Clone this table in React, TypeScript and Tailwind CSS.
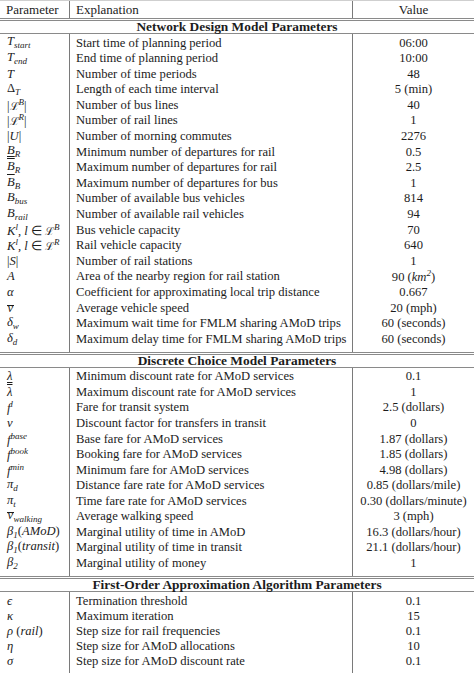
import React from "react";

type Row = { p: React.ReactNode; e: string; v: React.ReactNode };

const I = ({ children }: { children: React.ReactNode }) => <i className="italic">{children}</i>;
const Sub = ({ children }: { children: React.ReactNode }) => (
  <span className="text-[9px] italic align-[-3px] leading-none">{children}</span>
);
const Sup = ({ children }: { children: React.ReactNode }) => (
  <span className="text-[9px] italic align-[5px] leading-none">{children}</span>
);
const Bar = ({ children }: { children: React.ReactNode }) => (
  <span className="italic overline decoration-[0.5px]">{children}</span>
);
// bar over a lowercase letter: a short top border just above the x-height
const LowBar = ({ children }: { children: React.ReactNode }) => (
  <span className="inline-block italic leading-[5.5px] border-t border-[#1c1c1c] px-[0.5px]">{children}</span>
);
const Under = ({ children }: { children: React.ReactNode }) => (
  <span className="italic underline decoration-[0.8px] underline-offset-[2px]">{children}</span>
);
const Cal = ({ children }: { children: React.ReactNode }) => (
  <span className="[font-family:'DejaVu_Serif',serif] text-[11px]">{children}</span>
);

const network: Row[] = [
  { p: <><I>T</I><Sub>start</Sub></>, e: "Start time of planning period", v: "06:00" },
  { p: <><I>T</I><Sub>end</Sub></>, e: "End time of planning period", v: "10:00" },
  { p: <I>T</I>, e: "Number of time periods", v: "48" },
  { p: <>Δ<Sub>T</Sub></>, e: "Length of each time interval", v: "5 (min)" },
  { p: <>|<Cal>ℒ</Cal><Sup>B</Sup>|</>, e: "Number of bus lines", v: "40" },
  { p: <>|<Cal>ℒ</Cal><Sup>R</Sup>|</>, e: "Number of rail lines", v: "1" },
  { p: <>|<I>U</I>|</>, e: "Number of morning commutes", v: "2276" },
  { p: <><Under>B</Under><Sub>R</Sub></>, e: "Minimum number of departures for rail", v: "0.5" },
  { p: <><Bar>B</Bar><Sub>R</Sub></>, e: "Maximum number of departures for rail", v: "2.5" },
  { p: <><Bar>B</Bar><Sub>B</Sub></>, e: "Maximum number of departures for bus", v: "1" },
  { p: <><I>B</I><Sub>bus</Sub></>, e: "Number of available bus vehicles", v: "814" },
  { p: <><I>B</I><Sub>rail</Sub></>, e: "Number of available rail vehicles", v: "94" },
  { p: <><I>K</I><Sup>l</Sup>, <I>l</I> ∈ <Cal>ℒ</Cal><Sup>B</Sup></>, e: "Bus vehicle capacity", v: "70" },
  { p: <><I>K</I><Sup>l</Sup>, <I>l</I> ∈ <Cal>ℒ</Cal><Sup>R</Sup></>, e: "Rail vehicle capacity", v: "640" },
  { p: <>|<I>S</I>|</>, e: "Number of rail stations", v: "1" },
  { p: <I>A</I>, e: "Area of the nearby region for rail station", v: <>90 (<I>km</I><Sup>2</Sup>)</> },
  { p: <I>α</I>, e: "Coefficient for approximating local trip distance", v: "0.667" },
  { p: <LowBar>v</LowBar>, e: "Average vehicle speed", v: "20 (mph)" },
  { p: <><I>δ</I><Sub>w</Sub></>, e: "Maximum wait time for FMLM sharing AMoD trips", v: "60 (seconds)" },
  { p: <><I>δ</I><Sub>d</Sub></>, e: "Maximum delay time for FMLM sharing AMoD trips", v: "60 (seconds)" },
];

const choice: Row[] = [
  { p: <Under>λ</Under>, e: "Minimum discount rate for AMoD services", v: "0.1" },
  { p: <Bar>λ</Bar>, e: "Maximum discount rate for AMoD services", v: "1" },
  { p: <><I>f</I><Sup>l</Sup></>, e: "Fare for transit system", v: "2.5 (dollars)" },
  { p: <I>ν</I>, e: "Discount factor for transfers in transit", v: "0" },
  { p: <><I>f</I><Sup>base</Sup></>, e: "Base fare for AMoD services", v: "1.87 (dollars)" },
  { p: <><I>f</I><Sup>book</Sup></>, e: "Booking fare for AMoD services", v: "1.85 (dollars)" },
  { p: <><I>f</I><Sup>min</Sup></>, e: "Minimum fare for AMoD services", v: "4.98 (dollars)" },
  { p: <><I>π</I><Sub>d</Sub></>, e: "Distance fare rate for AMoD services", v: "0.85 (dollars/mile)" },
  { p: <><I>π</I><Sub>t</Sub></>, e: "Time fare rate for AMoD services", v: "0.30 (dollars/minute)" },
  { p: <><LowBar>v</LowBar><Sub>walking</Sub></>, e: "Average walking speed", v: "3 (mph)" },
  { p: <><I>β</I><Sub>1</Sub>(<I>AMoD</I>)</>, e: "Marginal utility of time in AMoD", v: "16.3 (dollars/hour)" },
  { p: <><I>β</I><Sub>1</Sub>(<I>transit</I>)</>, e: "Marginal utility of time in transit", v: "21.1 (dollars/hour)" },
  { p: <><I>β</I><Sub>2</Sub></>, e: "Marginal utility of money", v: "1" },
];

const algo: Row[] = [
  { p: <I>ϵ</I>, e: "Termination threshold", v: "0.1" },
  { p: <I>κ</I>, e: "Maximum iteration", v: "15" },
  { p: <><I>ρ</I> (<I>rail</I>)</>, e: "Step size for rail frequencies", v: "0.1" },
  { p: <I>η</I>, e: "Step size for AMoD allocations", v: "10" },
  { p: <I>σ</I>, e: "Step size for AMoD discount rate", v: "0.1" },
];

function Section({ title, rows, cell, pad }: { title: string; rows: Row[]; cell: string; pad: string }) {
  return (
    <section className="flex flex-col">
      <div className="h-[3px] border-y border-[#8a8a8a]" />
      <div className="h-[13px] flex items-center justify-center border-b border-[#8a8a8a] font-bold text-[13.4px]">
        <span>{title}</span>
      </div>
      <div className="flex">
        <div className={`w-[70px] shrink-0 flex flex-col border-r border-[#7a7a7a] pl-[7px] ${pad}`}>
          {rows.map((r, i) => (
            <div key={i} className={`${cell} flex items-center whitespace-nowrap`}>
              <span>{r.p}</span>
            </div>
          ))}
        </div>
        <div className={`w-[283px] shrink-0 flex flex-col border-r border-[#7a7a7a] pl-[6px] ${pad}`}>
          {rows.map((r, i) => (
            <div key={i} className={`${cell} flex items-center whitespace-nowrap`}>
              <span>{r.e}</span>
            </div>
          ))}
        </div>
        <div className={`flex-1 flex flex-col ${pad}`}>
          {rows.map((r, i) => (
            <div key={i} className={`${cell} flex items-center justify-center whitespace-nowrap`}>
              <span>{r.v}</span>
            </div>
          ))}
        </div>
      </div>
    </section>
  );
}

export default function App() {
  return (
    <div className="w-[474px] h-[673px] bg-white overflow-hidden text-[#1c1c1c] text-[12.6px] leading-none [font-family:'Liberation_Serif',serif]">
      <div className="flex h-[18px] border-t border-[#cfcfcf]">
        <div className="w-[70px] flex items-center border-r border-[#7a7a7a] pl-[6px] text-[13px]">Parameter</div>
        <div className="w-[283px] flex items-center border-r border-[#7a7a7a] pl-[6px] text-[13px]">Explanation</div>
        <div className="flex-1 flex items-center justify-center text-[13px]">Value</div>
      </div>
      <Section title="Network Design Model Parameters" rows={network} cell="h-[15.6px]" pad="pt-[1px] pb-[5px]" />
      <Section title="Discrete Choice Model Parameters" rows={choice} cell="h-[15.56px]" pad="pt-[1px] pb-[5px]" />
      <Section title="First-Order Approximation Algorithm Parameters" rows={algo} cell="h-[15px]" pad="pt-[2px] pb-[4px]" />
      <div className="border-t border-[#9a9a9a]" />
    </div>
  );
}
